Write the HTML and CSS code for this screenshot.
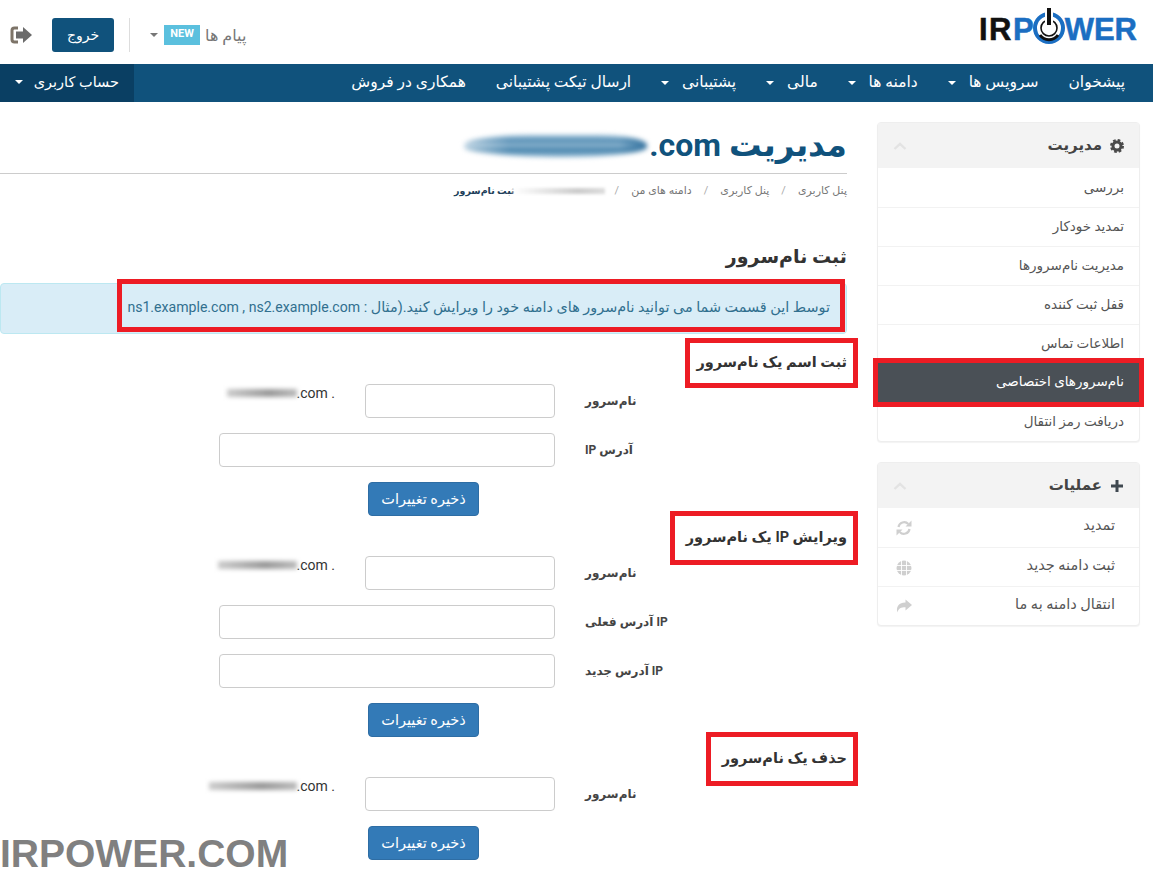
FILE: index.html
```html
<!DOCTYPE html>
<html lang="fa" dir="rtl">
<head>
    <meta charset="UTF-8">
    <meta name="viewport" content="width=device-width, initial-scale=1.0">
    <title>مدیریت دامنه</title>
    <link rel="stylesheet" href="styles.css">
</head>
<body>
    <!-- Header -->
    <header class="top-header">
        <div class="logo" dir="ltr">
            <span class="logo-black">IR</span><span class="logo-blue">P</span>
            <svg class="logo-power" viewBox="0 0 36 36" width="36" height="36">
                <circle cx="18" cy="20" r="14" fill="none" stroke="#1b6ec2" stroke-width="4"/>
                <path d="M9 27a11 11 0 0 0 18 0" fill="none" stroke="#111" stroke-width="3"/>
                <circle cx="18" cy="20" r="8" fill="none" stroke="#111" stroke-width="1.6"/>
                <rect x="14" y="0" width="8" height="18" fill="#fff"/>
                <rect x="16" y="0" width="4" height="17" fill="#111"/>
            </svg>
            <span class="logo-blue logo-end">WER</span>
        </div>
        <div class="header-tools">
            <span class="messages">پیام ها</span>
            <span class="badge-new" dir="ltr">NEW</span>
            <span class="caret caret-gray"></span>
            <span class="tools-divider"></span>
            <button class="logout-btn">خروج</button>
            <svg class="logout-icon" viewBox="0 0 22 18" width="22" height="18">
                <path d="M8 2H4.500A2.500 2.500 0 0 0 2 4.500v9A2.500 2.500 0 0 0 4.500 16H8" fill="none" stroke="#7d7468" stroke-width="3"/>
                <path d="M13 1l9 8-9 8v-4.500H6v-7h7z" fill="#6b6b6b"/>
            </svg>
        </div>
    </header>

    <!-- Main Nav -->
    <nav class="main-nav">
        <ul class="nav-links">
            <li>پیشخوان</li>
            <li>سرویس ها <span class="caret"></span></li>
            <li>دامنه ها <span class="caret"></span></li>
            <li>مالی <span class="caret"></span></li>
            <li>پشتیبانی <span class="caret"></span></li>
            <li>ارسال تیکت پشتیبانی</li>
            <li>همکاری در فروش</li>
        </ul>
        <div class="nav-account">حساب کاربری <span class="caret"></span></div>
    </nav>

    <div class="page">
        <!-- Sidebar -->
        <aside class="sidebar">
            <div class="panel">
                <div class="panel-heading">
                    <svg class="heading-icon" viewBox="0 0 14 14" width="14" height="14">
                        <circle cx="7" cy="7" r="4" fill="none" stroke="#4a4a4a" stroke-width="3"/>
                        <circle cx="7" cy="7" r="5.800" fill="none" stroke="#4a4a4a" stroke-width="2.400" stroke-dasharray="2.600 1.950"/>
                    </svg>
                    <span class="heading-text">مدیریت</span>
                    <svg class="chevron" viewBox="0 0 14 8" width="14" height="8"><path d="M1.500 7L7 1.800 12.500 7" fill="none" stroke="#e3e3e3" stroke-width="2.400"/></svg>
                </div>
                <ul class="panel-list">
                    <li>بررسی</li>
                    <li>تمدید خودکار</li>
                    <li>مدیریت نام‌سرورها</li>
                    <li>قفل ثبت کننده</li>
                    <li>اطلاعات تماس</li>
                    <li class="active">نام‌سرورهای اختصاصی</li>
                    <li>دریافت رمز انتقال</li>
                </ul>
            </div>
            <div class="panel">
                <div class="panel-heading">
                    <svg class="heading-icon" viewBox="0 0 14 14" width="14" height="14"><path d="M7 1v12M1 7h12" stroke="#3f4850" stroke-width="3"/></svg>
                    <span class="heading-text">عملیات</span>
                    <svg class="chevron" viewBox="0 0 14 8" width="14" height="8"><path d="M1.500 7L7 1.800 12.500 7" fill="none" stroke="#e3e3e3" stroke-width="2.400"/></svg>
                </div>
                <ul class="panel-list panel-actions">
                    <li>
                        <span>تمدید</span>
                        <svg viewBox="0 0 16 16" width="16" height="16">
                            <path d="M2.500 7a5.700 5.700 0 0 1 9.800-3M13.500 9a5.700 5.700 0 0 1-9.800 3" fill="none" stroke="#cfcfcf" stroke-width="2.200"/>
                            <path d="M15.500 0.500v6h-6zM0.500 15.500v-6h6z" fill="#cfcfcf"/>
                        </svg>
                    </li>
                    <li>
                        <span>ثبت دامنه جدید</span>
                        <svg viewBox="0 0 16 16" width="16" height="16">
                            <circle cx="8" cy="8" r="7.500" fill="#cfcfcf"/>
                            <path d="M0 5.500h16M0 10.500h16M5.500 0v16M10.500 0v16" stroke="#fff" stroke-width="0.900"/>
                        </svg>
                    </li>
                    <li>
                        <span>انتقال دامنه به ما</span>
                        <svg viewBox="0 0 16 14" width="16" height="14">
                            <path d="M9.500 0.500L16 6l-6.500 5.500V8.300C5 8.300 2.300 9.500 1.500 13.500 0 9 1.500 3.800 9.500 3.500z" fill="#cfcfcf"/>
                        </svg>
                    </li>
                </ul>
            </div>
        </aside>

        <!-- Content -->
        <main class="content">
            <h1 class="page-title">مدیریت <span class="title-domain" dir="ltr"><span class="blur-title"></span>.com</span></h1>
            <ul class="breadcrumb">
                <li>پنل کاربری</li>
                <li class="sep">/</li>
                <li>پنل کاربری</li>
                <li class="sep">/</li>
                <li>دامنه های من</li>
                <li class="sep">/</li>
                <li class="blur-crumb"></li>
                <li class="current">ثبت نام‌سرور</li>
            </ul>

            <h2 class="section-title">ثبت نام‌سرور</h2>
            <div class="info-alert">
                توسط این قسمت شما می توانید نام‌سرور های دامنه خود را ویرایش کنید.(مثال : <span class="alert-latin">ns1.example.com , ns2.example.com</span>
                <span class="alert-frame"></span>
            </div>

            <form class="ns-form form-first">
                <div class="form-heading"><h3 class="marked">ثبت اسم یک نام‌سرور</h3></div>
                <div class="form-row">
                    <label>نام‌سرور</label>
                    <input class="input-short" type="text">
                    <span class="domain-suffix" dir="ltr"><span class="blur-domain"></span>.com .</span>
                </div>
                <div class="form-row">
                    <label>آدرس IP</label>
                    <input class="input-long" type="text">
                </div>
                <button class="save-btn" type="button">ذخیره تغییرات</button>
            </form>

            <form class="ns-form">
                <div class="form-heading"><h3 class="marked marked-tall">ویرایش IP یک نام‌سرور</h3></div>
                <div class="form-row">
                    <label>نام‌سرور</label>
                    <input class="input-short" type="text">
                    <span class="domain-suffix" dir="ltr"><span class="blur-domain blur-wide"></span>.com .</span>
                </div>
                <div class="form-row">
                    <label>IP آدرس فعلی</label>
                    <input class="input-long" type="text">
                </div>
                <div class="form-row">
                    <label>IP آدرس جدید</label>
                    <input class="input-long" type="text">
                </div>
                <button class="save-btn" type="button">ذخیره تغییرات</button>
            </form>

            <form class="ns-form">
                <div class="form-heading"><h3 class="marked marked-tall">حذف یک نام‌سرور</h3></div>
                <div class="form-row">
                    <label>نام‌سرور</label>
                    <input class="input-short" type="text">
                    <span class="domain-suffix" dir="ltr"><span class="blur-domain blur-wider"></span>.com .</span>
                </div>
                <button class="save-btn" type="button">ذخیره تغییرات</button>
            </form>
        </main>
    </div>

    <div class="watermark" dir="ltr">IRPOWER.COM</div>
</body>
</html>
```

FILE: styles.css
```css
/* General Styles */
* {
    box-sizing: border-box;
}

html, body {
    height: 877px;
    overflow: hidden;
}

body {
    font-family: Roboto, "DejaVu Sans", sans-serif;
    font-size: 13.5px;
    margin: 0;
    padding: 0;
    background-color: #fff;
    color: #333;
    position: relative;
}

ul {
    list-style: none;
    margin: 0;
    padding: 0;
}

.caret {
    display: inline-block;
    width: 0;
    height: 0;
    border-top: 4px solid #fff;
    border-left: 4px solid transparent;
    border-right: 4px solid transparent;
    vertical-align: middle;
    margin-right: 8px;
}

.caret-gray {
    border-top-color: #777;
}

/* Header */
.top-header {
    display: flex;
    align-items: center;
    justify-content: space-between;
    height: 64px;
    padding: 0 16px 0 10px;
}

.logo {
    display: flex;
    align-items: center;
    font-family: "Liberation Sans", Arial, sans-serif;
    font-weight: bold;
    font-size: 31px;
    -webkit-text-stroke: 0.5px;
    margin-top: -4px;
}

.logo-black {
    color: #111;
    letter-spacing: 1.5px;
}

.logo-blue {
    color: #1b6ec2;
}

.logo-power {
    margin: -8px -2px 0 -3px;
}

.header-tools {
    display: flex;
    align-items: center;
    margin-top: 6px;
}

.messages {
    color: #777;
    font-size: 16px;
}

.badge-new {
    background: #5bc0de;
    color: #fff;
    font-size: 11px;
    font-weight: bold;
    width: 36px;
    height: 20px;
    line-height: 18px;
    text-align: center;
    margin-right: 5px;
}

.header-tools .caret {
    margin-right: 6px;
}

.tools-divider {
    width: 1px;
    height: 34px;
    background: #ddd;
    margin: 0 20px 0 15px;
}

.logout-btn {
    width: 62px;
    height: 34px;
    background: #10527c;
    color: #fff;
    border: none;
    border-radius: 3px;
    font-family: inherit;
    font-size: 14px;
    margin-left: 20px;
}

.logout-icon {
    display: block;
}

/* Main Nav */
.main-nav {
    display: flex;
    justify-content: space-between;
    height: 38px;
    background: #10527c;
    color: #fff;
    font-size: 15.500px;
}

.nav-links {
    display: flex;
    align-items: center;
    gap: 30px;
    padding: 0 28px 2px 0;
}

.nav-links .caret {
    margin-right: 9px;
}

.nav-account {
    display: flex;
    align-items: center;
    gap: 3px;
    width: 134px;
    padding: 0 15px 2px 0;
    background: #0a3f63;
    font-size: 14.500px;
}

/* Page Layout */
.page {
    display: flex;
    padding: 20px 13px 0 0;
    gap: 30px;
}

.sidebar {
    width: 263px;
    flex-shrink: 0;
}

.content {
    width: 847px;
}

/* Sidebar Panels */
.panel {
    border: 1px solid #eee;
    border-radius: 4px;
    box-shadow: 0 1px 1px rgba(0, 0, 0, 0.05);
    margin-bottom: 20px;
    background: #fff;
}

.panel-heading {
    display: flex;
    align-items: center;
    height: 45px;
    padding: 0 15px;
    background: #f3f3f3;
    font-size: 15px;
    font-weight: bold;
    color: #444;
}

.heading-text {
    padding-bottom: 2px;
}

.heading-icon {
    margin-left: 8px;
}

.chevron {
    margin-right: auto;
}

.panel-list li {
    height: 39px;
    line-height: 36px;
    padding: 0 15px;
    border-top: 1px solid #f2f2f2;
    color: #555;
}

.panel-list li:first-child {
    border-top: none;
    line-height: 38px;
}

.panel-list li.active {
    background: #4a5056;
    color: #fff;
    border-top: none;
    outline: 5px solid #ed1c24;
    position: relative;
}

.panel-actions li {
    display: flex;
    align-items: center;
    padding: 0 24px 3px 0;
    white-space: nowrap;
    position: relative;
    font-size: 14.500px;
}

.panel-actions li svg {
    position: absolute;
    left: 18px;
    top: 12px;
}

/* Title */
.page-title {
    margin: 0;
    height: 52px;
    border-bottom: 1px solid #ccc;
    font-size: 32.500px;
    line-height: 46px;
    font-weight: bold;
    color: #10527c;
}

.title-domain {
    display: inline-block;
    font-size: 32px;
}

.blur-title {
    display: inline-block;
    width: 183px;
    height: 22px;
    border-radius: 40% 30% 50% 60% / 50%;
    background:
        linear-gradient(90deg, rgba(255, 255, 255, 0.5), transparent 25%, transparent 85%, #2f6f9d),
        linear-gradient(180deg, #9cc0d8, #4d88b0 30%, #a4c4da 48%, #3f7fa9 62%, #8fb6d1);
    filter: blur(2.500px);
    margin-right: 2px;
    vertical-align: -1px;
}

.breadcrumb {
    display: flex;
    align-items: center;
    gap: 12px;
    margin-top: 9px;
    height: 15px;
    font-size: 11px;
    color: #777;
}

.breadcrumb .sep {
    color: #aaa;
}

.blur-crumb {
    width: 92px;
    height: 6px;
    background: linear-gradient(90deg, #fff, #ccc 70%, #ddd);
    filter: blur(1.500px);
    margin: 0 -2px;
}

.breadcrumb .current {
    color: #1e3f5a;
    margin-right: -12px;
    font-size: 9.500px;
    font-weight: bold;
}

.section-title {
    margin: 44px 0 0;
    font-size: 19px;
    line-height: 30px;
    font-weight: bold;
    color: #333;
}

/* Alert */
.info-alert {
    position: relative;
    height: 51px;
    margin-top: 11px;
    padding: 0 16px;
    line-height: 47px;
    background: #d9edf7;
    border: 1px solid #bce8f1;
    border-radius: 4px;
    color: #31708f;
    font-size: 14.400px;
    white-space: nowrap;
}

.alert-latin {
    font-size: 14.100px;
}

.alert-frame {
    position: absolute;
    top: -5px;
    right: 1px;
    width: 728px;
    height: 53px;
    border: 5px solid #ed1c24;
}

/* Forms */
.ns-form {
    margin-top: 5px;
}

.form-first {
    margin-top: 15px;
}

.form-heading {
    height: 35px;
}

.marked {
    display: inline-block;
    margin: 0;
    font-size: 14.500px;
    line-height: 28px;
    font-weight: bold;
    color: #333;
    outline: 5px solid #ed1c24;
    outline-offset: 6px;
}

.marked-tall {
    margin-top: 1px;
    padding: 2px 0 2px 5px;
}

.form-row {
    display: flex;
    align-items: center;
    margin-bottom: 15px;
}

.form-row label {
    display: flex;
    justify-content: flex-end;
    width: 262px;
    margin-left: 30px;
    font-size: 12px;
    font-weight: bold;
    color: #444;
}

.form-row input {
    height: 34px;
    border: 1px solid #ccc;
    border-radius: 4px;
    background: #fff;
}

.input-short {
    width: 190px;
}

.input-long {
    width: 336px;
}

.domain-suffix {
    align-self: flex-start;
    margin-right: 30px;
    font-size: 14px;
    line-height: 18px;
}

.blur-domain {
    display: inline-block;
    width: 70px;
    height: 8px;
    background: linear-gradient(90deg, #ccc, #999 60%, #bbb);
    filter: blur(2px);
    vertical-align: 1px;
}

.blur-wide {
    width: 79px;
}

.blur-wider {
    width: 88px;
}

.save-btn {
    display: block;
    width: 111px;
    height: 34px;
    margin-right: 368px;
    background: #337ab7;
    border: 1px solid #2e6da4;
    border-radius: 4px;
    color: #fff;
    font-family: inherit;
    font-size: 14.500px;
}

/* Watermark */
.watermark {
    position: absolute;
    left: 0;
    top: 831px;
    font-family: "Liberation Sans", Arial, sans-serif;
    font-weight: bold;
    font-size: 39px;
    line-height: 45px;
    color: #808080;
}
```
